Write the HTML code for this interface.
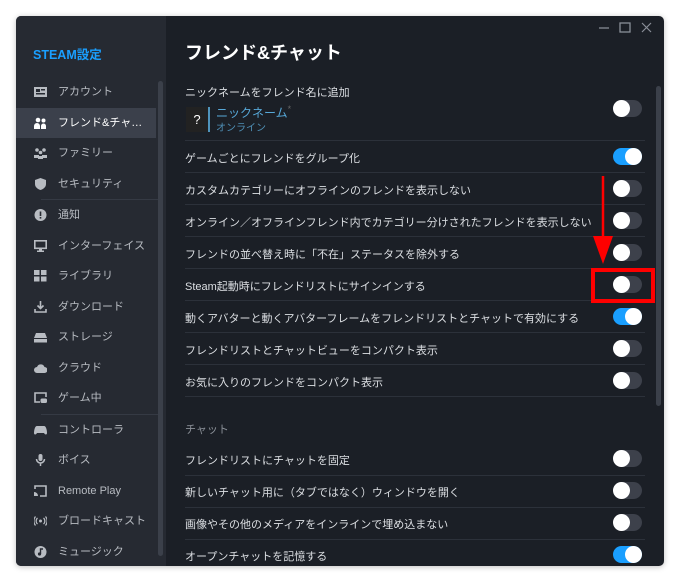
<!DOCTYPE html>
<html><head><meta charset="utf-8"><style>
*{margin:0;padding:0;box-sizing:border-box}
body{width:680px;height:582px;background:#fff;font-family:"Liberation Sans","Noto Sans CJK JP",sans-serif;position:relative;overflow:hidden}
.win{position:absolute;left:16px;top:16px;width:648px;height:550px;background:#1b1f26;border-radius:5px;overflow:hidden;box-shadow:0 1px 6px rgba(0,0,0,.25)}
.side{position:absolute;left:0;top:0;width:150px;height:550px;background:#262a32}
.logo{position:absolute;left:17px;top:28px;color:#1a9fff;font-weight:bold;font-size:12.5px}
.si{position:absolute;left:0;width:140px;height:30px;color:#b8bcc2;font-size:11px;line-height:30px;padding-left:42px}
.si.sel{background:#3b404b;color:#fff}
.si svg{position:absolute;left:18px;top:9px;width:13px;height:12px}
.div{position:absolute;left:25px;width:122px;height:1px;background:#353a44}
.sscroll{position:absolute;left:142px;top:65px;width:5px;height:475px;background:#3b404a;border-radius:3px}
.main{position:absolute;left:150px;top:0;width:498px;height:550px}
h1{position:absolute;left:19px;top:23px;color:#fff;font-size:18px;font-weight:bold}
.row{position:absolute;left:19px;width:460px;color:#dcdfe3;font-size:11px}
.sep{position:absolute;left:19px;width:460px;height:1px;background:#2c313a}
.tg{position:absolute;left:447px;width:29px;height:17px;border-radius:9px;background:#3d414b}
.tg::after{content:"";position:absolute;left:0;top:0;width:17px;height:17px;border-radius:50%;background:#fff}
.tg.on{background:#1a9fff}.tg.on::after{left:12px}
.mscroll{position:absolute;left:640px;top:70px;width:5px;height:320px;background:#3b404a;border-radius:3px}
</style></head><body>
<div class="win">
<div class="side">
<div class="logo">STEAM設定</div>
<div class="si" style="top:61px"><svg viewBox="0 0 13 12"><rect x="0" y="1" width="13" height="10" fill="#b8bcc2"/><rect x="2" y="3" width="4" height="3" fill="#262a32"/><rect x="7" y="3" width="4" height="1.5" fill="#262a32"/><rect x="2" y="7" width="9" height="1.5" fill="#262a32"/></svg>アカウント</div>
<div class="si sel" style="top:92px"><svg viewBox="0 0 13 12"><circle cx="4" cy="3" r="2.3" fill="#fff"/><circle cx="9.5" cy="3.5" r="2" fill="#fff"/><path d="M0 12v-3a3 3 0 0 1 6 0v3zM7 12v-3a2.5 2.5 0 0 1 5 0v3z" fill="#fff"/></svg>フレンド&amp;チャ…</div>
<div class="si" style="top:122px"><svg viewBox="0 0 13 12"><circle cx="3" cy="3" r="1.8" fill="#b8bcc2"/><circle cx="10" cy="3" r="1.8" fill="#b8bcc2"/><circle cx="6.5" cy="5.5" r="1.8" fill="#b8bcc2"/><path d="M0 11v-3h5v3zM8 11v-3h5v3zM4 12v-3h5v3z" fill="#b8bcc2"/></svg>ファミリー</div>
<div class="si" style="top:153px"><svg viewBox="0 0 13 12"><path d="M6.5 0L12 2v4c0 3-2.5 5-5.5 6C3.5 11 1 9 1 6V2z" fill="#b8bcc2"/></svg>セキュリティ</div>
<div class="div" style="top:183px"></div>
<div class="si" style="top:184px"><svg viewBox="0 0 13 12"><circle cx="6.5" cy="6" r="6" fill="#b8bcc2"/><rect x="5.7" y="2.5" width="1.6" height="4.5" fill="#262a32"/><rect x="5.7" y="8" width="1.6" height="1.6" fill="#262a32"/></svg>通知</div>
<div class="si" style="top:215px"><svg viewBox="0 0 13 12"><rect x="0.8" y="0.8" width="11.4" height="7.5" fill="none" stroke="#b8bcc2" stroke-width="1.6"/><rect x="5" y="9" width="3" height="2" fill="#b8bcc2"/><rect x="3" y="10.5" width="7" height="1.5" fill="#b8bcc2"/></svg>インターフェイス</div>
<div class="si" style="top:245px"><svg viewBox="0 0 13 12"><rect x="0" y="0" width="5.5" height="5" fill="#b8bcc2"/><rect x="7" y="0" width="5.5" height="5" fill="#b8bcc2"/><rect x="0" y="6.5" width="5.5" height="5" fill="#b8bcc2"/><rect x="7" y="6.5" width="5.5" height="5" fill="#b8bcc2"/></svg>ライブラリ</div>
<div class="si" style="top:276px"><svg viewBox="0 0 13 12"><path d="M6.5 0v7M3.5 4.5l3 3 3-3M1 8v3h11V8" fill="none" stroke="#b8bcc2" stroke-width="1.6"/></svg>ダウンロード</div>
<div class="si" style="top:306px"><svg viewBox="0 0 13 12"><path d="M2 2h9l2 5H0z" fill="#b8bcc2"/><rect x="0" y="8" width="13" height="3.5" fill="#b8bcc2"/></svg>ストレージ</div>
<div class="si" style="top:337px"><svg viewBox="0 0 13 12"><path d="M3 11a3 3 0 0 1 0-6 4 4 0 0 1 7.5 0 3 3 0 0 1 0 6z" fill="#b8bcc2"/></svg>クラウド</div>
<div class="si" style="top:367px"><svg viewBox="0 0 13 12"><path d="M6 10H1V1h11v4" fill="none" stroke="#b8bcc2" stroke-width="1.6"/><rect x="6.5" y="6.5" width="6.5" height="4.5" rx="1.5" fill="#b8bcc2"/></svg>ゲーム中</div>
<div class="div" style="top:398px"></div>
<div class="si" style="top:399px"><svg viewBox="0 0 13 12"><path d="M3 2h7c2 0 3 4 3 7 0 2-2 2-3 0H3c-1 2-3 2-3 0 0-3 1-7 3-7z" fill="#b8bcc2"/></svg>コントローラ</div>
<div class="si" style="top:429px"><svg viewBox="0 0 13 12"><rect x="4.5" y="0" width="4" height="7" rx="2" fill="#b8bcc2"/><path d="M2.5 5a4 4 0 0 0 8 0M6.5 9v3" fill="none" stroke="#b8bcc2" stroke-width="1.5"/></svg>ボイス</div>
<div class="si" style="top:460px"><svg viewBox="0 0 13 12"><path d="M1 4V1h11v10H6" fill="none" stroke="#b8bcc2" stroke-width="1.6"/><path d="M0 7a4 4 0 0 1 4 4H0z" fill="#b8bcc2"/></svg>Remote Play</div>
<div class="si" style="top:490px"><svg viewBox="0 0 13 12"><circle cx="6.5" cy="6" r="1.5" fill="#b8bcc2"/><path d="M3.5 3a4 4 0 0 0 0 6M9.5 3a4 4 0 0 1 0 6M1.5 1.5a7 7 0 0 0 0 9M11.5 1.5a7 7 0 0 1 0 9" fill="none" stroke="#b8bcc2" stroke-width="1.2"/></svg>ブロードキャスト</div>
<div class="si" style="top:521px"><svg viewBox="0 0 13 12"><circle cx="6.5" cy="6" r="6" fill="#b8bcc2"/><circle cx="5.5" cy="8" r="1.6" fill="#262a32"/><path d="M6.5 8V3h2.5" stroke="#262a32" stroke-width="1.4" fill="none"/></svg>ミュージック</div>
<div class="sscroll"></div>
</div>
<div class="main">
<h1>フレンド&amp;チャット</h1>
<svg style="position:absolute;left:432px;top:6px" width="56" height="12"><path d="M1 6h10" stroke="#8a8f98" stroke-width="1.2"/><rect x="22" y="1" width="10" height="9" fill="none" stroke="#8a8f98" stroke-width="1.3"/><path d="M44 1l9 9M53 1l-9 9" stroke="#8a8f98" stroke-width="1.2"/></svg>
<div class="row" style="top:68px">ニックネームをフレンド名に追加</div>
<div style="position:absolute;left:20px;top:91px;width:24px;height:25px;background:#222;border-right:2px solid #4f94bc;color:#fff;font-size:13px;text-align:center;line-height:25px">?</div>
<div style="position:absolute;left:50px;top:88px;color:#57a8d8;font-size:12px">ニックネーム<span style="color:#666;font-size:9px;vertical-align:top">*</span></div>
<div style="position:absolute;left:50px;top:103px;color:#4f8fb5;font-size:10px">オンライン</div>
<div class="tg" style="top:84px"></div>
<div class="sep" style="top:124px"></div>
<div class="row" style="top:134px">ゲームごとにフレンドをグループ化</div><div class="tg on" style="top:132px"></div>
<div class="sep" style="top:156px"></div>
<div class="row" style="top:166px">カスタムカテゴリーにオフラインのフレンドを表示しない</div><div class="tg" style="top:164px"></div>
<div class="sep" style="top:188px"></div>
<div class="row" style="top:198px">オンライン／オフラインフレンド内でカテゴリー分けされたフレンドを表示しない</div><div class="tg" style="top:196px"></div>
<div class="sep" style="top:220px"></div>
<div class="row" style="top:230px">フレンドの並べ替え時に「不在」ステータスを除外する</div><div class="tg" style="top:228px"></div>
<div class="sep" style="top:252px"></div>
<div class="row" style="top:262px">Steam起動時にフレンドリストにサインインする</div><div class="tg" style="top:260px"></div>
<div class="sep" style="top:284px"></div>
<div class="row" style="top:294px">動くアバターと動くアバターフレームをフレンドリストとチャットで有効にする</div><div class="tg on" style="top:292px"></div>
<div class="sep" style="top:316px"></div>
<div class="row" style="top:326px">フレンドリストとチャットビューをコンパクト表示</div><div class="tg" style="top:324px"></div>
<div class="sep" style="top:348px"></div>
<div class="row" style="top:358px">お気に入りのフレンドをコンパクト表示</div><div class="tg" style="top:356px"></div>
<div class="sep" style="top:380px"></div>
<div class="row" style="top:405px;color:#8b9098">チャット</div>
<div class="row" style="top:436px">フレンドリストにチャットを固定</div><div class="tg" style="top:434px"></div>
<div class="sep" style="top:459px"></div>
<div class="row" style="top:468px">新しいチャット用に（タブではなく）ウィンドウを開く</div><div class="tg" style="top:466px"></div>
<div class="sep" style="top:491px"></div>
<div class="row" style="top:500px">画像やその他のメディアをインラインで埋め込まない</div><div class="tg" style="top:498px"></div>
<div class="sep" style="top:523px"></div>
<div class="row" style="top:532px">オープンチャットを記憶する</div><div class="tg on" style="top:530px"></div>
</div>
<div class="mscroll"></div>
</div>
<div style="position:absolute;left:591px;top:268px;width:64px;height:35px;border:4px solid #f00"></div>
<svg style="position:absolute;left:590px;top:174px" width="26" height="92"><path d="M13 2v68" stroke="#f00" stroke-width="2.5"/><path d="M3 62h20L13 90z" fill="#f00"/></svg>
</body></html>
